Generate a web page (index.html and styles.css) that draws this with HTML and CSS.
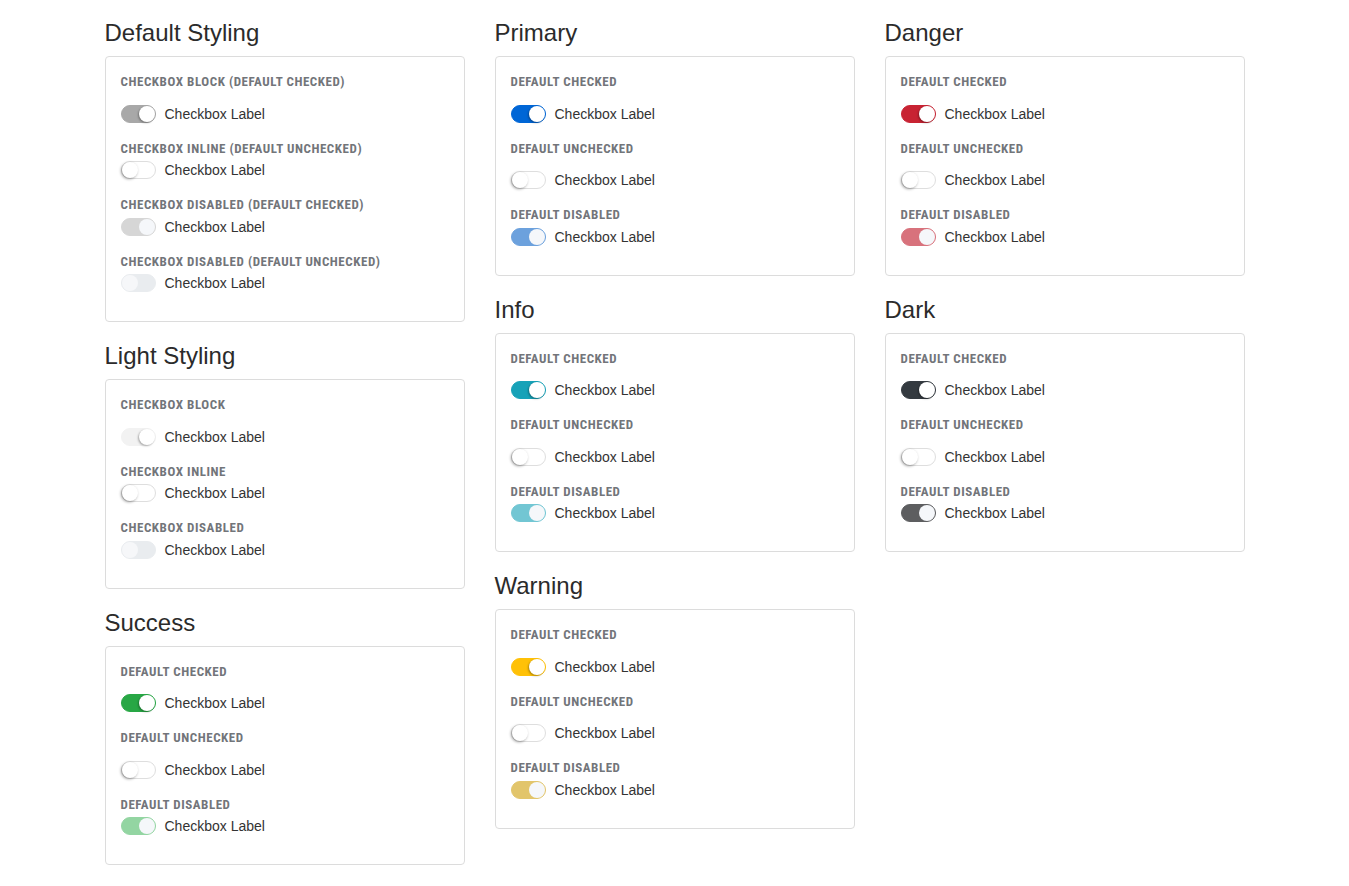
FILE: index.html
```html
<!DOCTYPE html>
<html lang="en">
<head>
  <meta charset="UTF-8">
  <title>Toggle Switches</title>
  <link rel="stylesheet" href="styles.css">
</head>
<body>

<div class="container">

  <div class="column">
    <h4>Default Styling</h4>
    <div class="card">
      <div class="field spaced">
        <div class="field-label">Checkbox Block (Default Checked)</div>
        <label class="switch"><input type="checkbox" checked><span class="slider"></span>Checkbox Label</label>
      </div>
      <div class="field">
        <div class="field-label">Checkbox Inline (Default Unchecked)</div>
        <label class="switch"><input type="checkbox"><span class="slider"></span>Checkbox Label</label>
      </div>
      <div class="field">
        <div class="field-label">Checkbox Disabled (Default Checked)</div>
        <label class="switch"><input type="checkbox" checked disabled><span class="slider"></span>Checkbox Label</label>
      </div>
      <div class="field">
        <div class="field-label">Checkbox Disabled (Default Unchecked)</div>
        <label class="switch"><input type="checkbox" disabled><span class="slider"></span>Checkbox Label</label>
      </div>
    </div>

    <h4>Light Styling</h4>
    <div class="card light">
      <div class="field spaced">
        <div class="field-label">Checkbox Block</div>
        <label class="switch"><input type="checkbox" checked><span class="slider"></span>Checkbox Label</label>
      </div>
      <div class="field">
        <div class="field-label">Checkbox Inline</div>
        <label class="switch"><input type="checkbox"><span class="slider"></span>Checkbox Label</label>
      </div>
      <div class="field">
        <div class="field-label">Checkbox Disabled</div>
        <label class="switch"><input type="checkbox" disabled><span class="slider"></span>Checkbox Label</label>
      </div>
    </div>

    <h4>Success</h4>
    <div class="card success">
      <div class="field spaced">
        <div class="field-label">Default Checked</div>
        <label class="switch"><input type="checkbox" checked><span class="slider"></span>Checkbox Label</label>
      </div>
      <div class="field spaced">
        <div class="field-label">Default Unchecked</div>
        <label class="switch"><input type="checkbox"><span class="slider"></span>Checkbox Label</label>
      </div>
      <div class="field">
        <div class="field-label">Default Disabled</div>
        <label class="switch"><input type="checkbox" checked disabled><span class="slider"></span>Checkbox Label</label>
      </div>
    </div>
  </div>

  <div class="column">
    <h4>Primary</h4>
    <div class="card primary">
      <div class="field spaced">
        <div class="field-label">Default Checked</div>
        <label class="switch"><input type="checkbox" checked><span class="slider"></span>Checkbox Label</label>
      </div>
      <div class="field spaced">
        <div class="field-label">Default Unchecked</div>
        <label class="switch"><input type="checkbox"><span class="slider"></span>Checkbox Label</label>
      </div>
      <div class="field">
        <div class="field-label">Default Disabled</div>
        <label class="switch"><input type="checkbox" checked disabled><span class="slider"></span>Checkbox Label</label>
      </div>
    </div>

    <h4>Info</h4>
    <div class="card info">
      <div class="field spaced">
        <div class="field-label">Default Checked</div>
        <label class="switch"><input type="checkbox" checked><span class="slider"></span>Checkbox Label</label>
      </div>
      <div class="field spaced">
        <div class="field-label">Default Unchecked</div>
        <label class="switch"><input type="checkbox"><span class="slider"></span>Checkbox Label</label>
      </div>
      <div class="field">
        <div class="field-label">Default Disabled</div>
        <label class="switch"><input type="checkbox" checked disabled><span class="slider"></span>Checkbox Label</label>
      </div>
    </div>

    <h4>Warning</h4>
    <div class="card warning">
      <div class="field spaced">
        <div class="field-label">Default Checked</div>
        <label class="switch"><input type="checkbox" checked><span class="slider"></span>Checkbox Label</label>
      </div>
      <div class="field spaced">
        <div class="field-label">Default Unchecked</div>
        <label class="switch"><input type="checkbox"><span class="slider"></span>Checkbox Label</label>
      </div>
      <div class="field">
        <div class="field-label">Default Disabled</div>
        <label class="switch"><input type="checkbox" checked disabled><span class="slider"></span>Checkbox Label</label>
      </div>
    </div>
  </div>

  <div class="column">
    <h4>Danger</h4>
    <div class="card danger">
      <div class="field spaced">
        <div class="field-label">Default Checked</div>
        <label class="switch"><input type="checkbox" checked><span class="slider"></span>Checkbox Label</label>
      </div>
      <div class="field spaced">
        <div class="field-label">Default Unchecked</div>
        <label class="switch"><input type="checkbox"><span class="slider"></span>Checkbox Label</label>
      </div>
      <div class="field">
        <div class="field-label">Default Disabled</div>
        <label class="switch"><input type="checkbox" checked disabled><span class="slider"></span>Checkbox Label</label>
      </div>
    </div>

    <h4>Dark</h4>
    <div class="card dark">
      <div class="field spaced">
        <div class="field-label">Default Checked</div>
        <label class="switch"><input type="checkbox" checked><span class="slider"></span>Checkbox Label</label>
      </div>
      <div class="field spaced">
        <div class="field-label">Default Unchecked</div>
        <label class="switch"><input type="checkbox"><span class="slider"></span>Checkbox Label</label>
      </div>
      <div class="field">
        <div class="field-label">Default Disabled</div>
        <label class="switch"><input type="checkbox" checked disabled><span class="slider"></span>Checkbox Label</label>
      </div>
    </div>
  </div>

</div>

</body>
</html>
```

FILE: styles.css
```css
body {
  margin: 0;
  font-family: 'Liberation Sans', Arial, sans-serif;
  color: #333;
  background: #fff;
}
.container {
  width: 1140px;
  margin: 0 auto;
  padding-top: 19px;
  display: grid;
  grid-template-columns: repeat(3, 360px);
  column-gap: 30px;
  align-items: start;
}
h4 {
  font-size: 24px;
  font-weight: 400;
  line-height: 28px;
  color: #2b2b2b;
  margin: 0 0 9px;
}
.card {
  border: 1px solid #dcdcdc;
  border-radius: 4px;
  padding: 16px 15px 12px;
  margin-bottom: 20px;
}
.field {
  margin-bottom: 14px;
}
.field-label {
  font-family: 'Liberation Sans Narrow', 'Roboto Condensed', 'Liberation Sans', sans-serif;
  font-size: 13px;
  font-weight: 700;
  line-height: 18.5px;
  letter-spacing: 0.55px;
  text-transform: uppercase;
  color: #72757a;
}
.field.spaced .switch {
  margin-top: 10px;
}
.switch {
  display: flex;
  align-items: center;
  gap: 9px;
  height: 24px;
  font-size: 14px;
  color: #333;
  cursor: pointer;
}
.switch input {
  display: none;
}
.slider {
  --on: #a8a8a8;
  --off-disabled: #d6d6d6;
  position: relative;
  box-sizing: border-box;
  width: 35px;
  height: 18px;
  border: 1px solid #dedede;
  border-radius: 9px;
  background: #fff;
}
.slider::before {
  content: "";
  position: absolute;
  top: 0;
  left: 0;
  width: 16px;
  height: 16px;
  border-radius: 50%;
  background: #fff;
  box-shadow: -1px 1px 3px rgba(0, 0, 0, 0.4);
}
input:checked + .slider {
  background: var(--on);
  border-color: var(--on);
}
input:checked + .slider::before {
  left: 17px;
  box-shadow: -1px 1px 2px rgba(0, 0, 0, 0.3);
}
input:disabled + .slider {
  background: #e9ecef;
  border-color: #e9ecef;
}
input:disabled + .slider::before {
  background: #f6f7f9;
  box-shadow: none;
}
input:checked:disabled + .slider {
  background: var(--off-disabled);
  border-color: var(--off-disabled);
}
input:checked:disabled + .slider::before {
  background: #f5f7fa;
}

.light input:checked + .slider {
  background: #f2f2f2;
  border-color: #f2f2f2;
}
.primary .slider { --on: #0066d6; --off-disabled: #6ca1dd; }
.success .slider { --on: #28a745; --off-disabled: #93d5a2; }
.info .slider { --on: #17a2b8; --off-disabled: #72c6d3; }
.warning .slider { --on: #ffc107; --off-disabled: #e2c56b; }
.danger .slider { --on: #c82333; --off-disabled: #d8727c; }
.dark .slider { --on: #343a40; --off-disabled: #5d5e60; }
```
